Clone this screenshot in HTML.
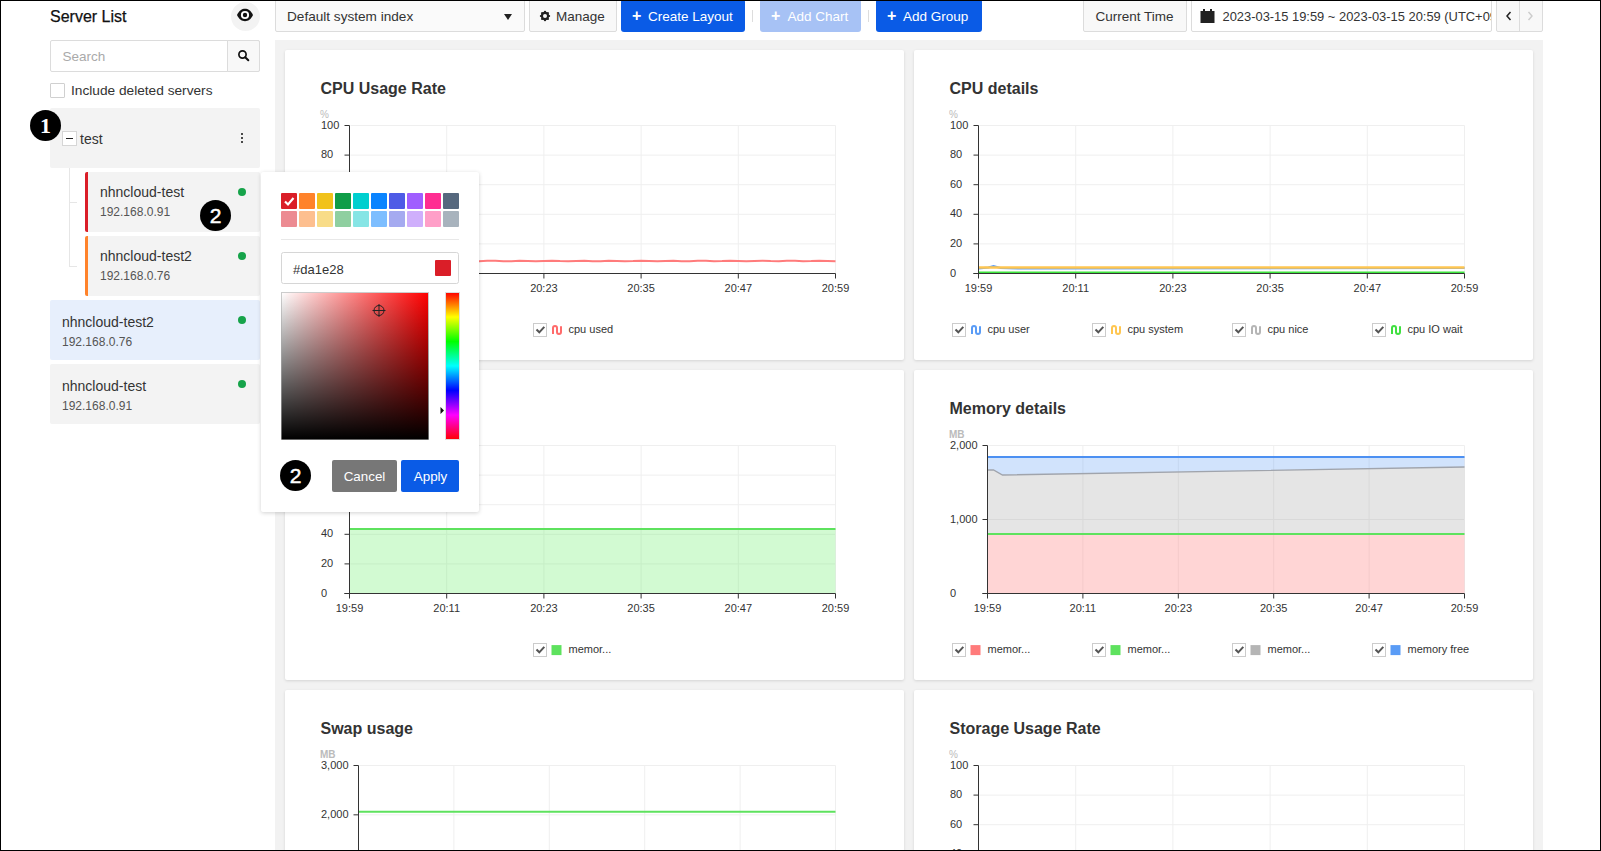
<!DOCTYPE html>
<html><head><meta charset="utf-8">
<style>
*{box-sizing:border-box;margin:0;padding:0}
html,body{width:1601px;height:851px;overflow:hidden;background:#fff;font-family:"Liberation Sans",sans-serif;color:#333}
.a{position:absolute}
.t{position:absolute;white-space:nowrap;line-height:1}
#frame{position:absolute;left:0;top:0;width:1601px;height:851px;border:1px solid #000;z-index:100;pointer-events:none}
.btn{position:absolute;top:-1px;height:33px;border:1px solid #dcdcdc;border-radius:2px;background:#f8f8f8}
.bbtn{position:absolute;top:-1px;height:33px;border-radius:3px;background:#0a5be6}
.sep{position:absolute;top:10px;width:1px;height:12px;background:#ddd}
.card{position:absolute;width:619px;height:310px;background:#fff;border-radius:2px;box-shadow:0 1px 3px rgba(0,0,0,.13)}
.srv{position:absolute;background:#f3f3f3;border-radius:2px}
.name{font-size:14px;color:#333}
.ip{font-size:12px;color:#555}
.dot{position:absolute;width:8px;height:8px;border-radius:50%;background:#16a34a}
.badge{position:absolute;width:31px;height:31px;border-radius:50%;background:#000;color:#fff;z-index:50}
svg text{font-family:"Liberation Sans",sans-serif}
.ttl{font-size:16px;font-weight:bold;fill:#333}
.unit{font-size:10px;fill:#bbb}
.unitb{font-size:10px;font-weight:bold;fill:#bbb}
.lab{font-size:11px;fill:#333}
.leg{font-size:11px;fill:#333}
.grid{stroke:#efefef;stroke-width:1}
.axis{stroke:#333;stroke-width:1}
</style></head><body>
<div id="frame"></div>

<!-- sidebar -->
<div class="t" style="left:50px;top:8.5px;font-size:16px;color:#111;-webkit-text-stroke:0.25px #111">Server List</div>
<div class="a" style="left:231px;top:2px;width:29px;height:29px;border-radius:50%;background:#f3f3f3"></div>
<svg class="a" style="left:236px;top:7px" width="18" height="16" viewBox="0 0 18 16">
 <path d="M1 8 C3 3.5 6 1.75 9 1.75 C12 1.75 15 3.5 17 8 C15 12.5 12 14.2 9 14.2 C6 14.2 3 12.5 1 8Z" fill="#111"/>
 <circle cx="9" cy="8" r="4.1" fill="#fff"/>
 <circle cx="9" cy="8" r="2.2" fill="#111"/>
</svg>

<div class="a" style="left:50px;top:40px;width:210px;height:32px;border:1px solid #dcdcdc;border-radius:2px;background:#fff"></div>
<div class="a" style="left:227px;top:40px;width:33px;height:32px;border:1px solid #dcdcdc;border-radius:0 2px 2px 0;background:#f8f8f8"></div>
<svg class="a" style="left:236px;top:48px" width="16" height="16" viewBox="0 0 16 16">
 <circle cx="6.5" cy="6.5" r="3.6" fill="none" stroke="#111" stroke-width="1.7"/>
 <path d="M9.2 9.2 L12.3 12.3" stroke="#111" stroke-width="2" stroke-linecap="round"/>
</svg>
<div class="t" style="left:62.5px;top:50px;font-size:13.5px;color:#aaa">Search</div>

<div class="a" style="left:50px;top:83px;width:15px;height:15px;border:1px solid #d0d0d0;border-radius:1px;background:#fff"></div>
<div class="t" style="left:71px;top:83.5px;font-size:13.7px;color:#333">Include deleted servers</div>

<div class="srv" style="left:50px;top:108px;width:210px;height:60px"></div>
<div class="a" style="left:62px;top:131px;width:15px;height:15px;border:1px solid #d6d6d6;background:#fff"></div>
<div class="a" style="left:66px;top:138px;width:7px;height:1px;background:#222"></div>
<div class="t" style="left:80px;top:132px;font-size:14px;color:#333">test</div>
<div class="a" style="left:241px;top:133px;width:2px;height:2px;background:#111;border-radius:1px"></div>
<div class="a" style="left:241px;top:137px;width:2px;height:2px;background:#111;border-radius:1px"></div>
<div class="a" style="left:241px;top:141px;width:2px;height:2px;background:#111;border-radius:1px"></div>

<div class="a" style="left:69px;top:168px;width:1px;height:99px;background:#e6e6e6"></div>
<div class="a" style="left:69px;top:202px;width:8px;height:1px;background:#e6e6e6"></div>
<div class="a" style="left:69px;top:266px;width:8px;height:1px;background:#e6e6e6"></div>

<div class="srv" style="left:85px;top:172px;width:175px;height:60px;border-left:3px solid #da1e28"></div>
<div class="t name" style="left:100px;top:184.5px">nhncloud-test</div>
<div class="t ip" style="left:100px;top:205.5px">192.168.0.91</div>
<div class="dot" style="left:238px;top:188px"></div>

<div class="srv" style="left:85px;top:236px;width:175px;height:60px;border-left:3px solid #ff832b"></div>
<div class="t name" style="left:100px;top:248.5px">nhncloud-test2</div>
<div class="t ip" style="left:100px;top:269.5px">192.168.0.76</div>
<div class="dot" style="left:238px;top:252px"></div>

<div class="srv" style="left:50px;top:300px;width:210px;height:60px;background:#e7effc"></div>
<div class="t name" style="left:62px;top:314.5px">nhncloud-test2</div>
<div class="t ip" style="left:62px;top:335.5px">192.168.0.76</div>
<div class="dot" style="left:238px;top:316px"></div>

<div class="srv" style="left:50px;top:364px;width:210px;height:60px"></div>
<div class="t name" style="left:62px;top:378.5px">nhncloud-test</div>
<div class="t ip" style="left:62px;top:399.5px">192.168.0.91</div>
<div class="dot" style="left:238px;top:380px"></div>

<!-- top bar -->
<div class="btn" style="left:275px;width:250px;background:#fafafa"></div>
<div class="t" style="left:287px;top:9.5px;font-size:13.6px;color:#333">Default system index</div>
<div class="a" style="left:503.5px;top:13.5px;width:0;height:0;border-left:4.5px solid transparent;border-right:4.5px solid transparent;border-top:6px solid #222"></div>

<div class="btn" style="left:529px;width:88px"></div>
<svg class="a" style="left:539px;top:10px" width="12" height="12" viewBox="0 0 12 12">
 <g fill="#222"><circle cx="6" cy="6" r="4.2"/>
 <rect x="4.9" y="0.8" width="2.2" height="10.4" rx="1"/>
 <rect x="4.9" y="0.8" width="2.2" height="10.4" rx="1" transform="rotate(45 6 6)"/>
 <rect x="4.9" y="0.8" width="2.2" height="10.4" rx="1" transform="rotate(90 6 6)"/>
 <rect x="4.9" y="0.8" width="2.2" height="10.4" rx="1" transform="rotate(135 6 6)"/></g>
 <circle cx="6" cy="6" r="2" fill="#f8f8f8"/>
</svg>
<div class="t" style="left:556px;top:9.5px;font-size:13.5px;color:#333">Manage</div>

<div class="bbtn" style="left:621px;width:124px"></div>
<div class="t" style="left:632px;top:8px;font-size:16px;font-weight:bold;color:#fff">+</div>
<div class="t" style="left:648px;top:10px;font-size:13.5px;color:#fff">Create Layout</div>
<div class="sep" style="left:752px"></div>

<div class="bbtn" style="left:760px;width:101px;background:#a7c2f5"></div>
<div class="t" style="left:771px;top:8px;font-size:16px;font-weight:bold;color:#fff">+</div>
<div class="t" style="left:787.5px;top:10px;font-size:13.5px;color:#fff">Add Chart</div>
<div class="sep" style="left:868px"></div>

<div class="bbtn" style="left:876px;width:106px"></div>
<div class="t" style="left:887px;top:8px;font-size:16px;font-weight:bold;color:#fff">+</div>
<div class="t" style="left:903px;top:10px;font-size:13.5px;color:#fff">Add Group</div>

<div class="btn" style="left:1083px;width:104px"></div>
<div class="t" style="left:1095.5px;top:9.5px;font-size:13.5px;color:#333">Current Time</div>

<div class="btn" style="left:1191px;width:301px;background:#fff;overflow:hidden">
 <svg class="a" style="left:8px;top:9px" width="15" height="15" viewBox="0 0 15 15">
  <rect x="0.5" y="2" width="14" height="12" fill="#222"/>
  <rect x="3" y="0" width="2" height="3" fill="#222"/><rect x="10" y="0" width="2" height="3" fill="#222"/>
   </svg>
 <div class="t" style="left:30.5px;top:10.5px;font-size:12.9px;color:#333">2023-03-15 19:59 ~ 2023-03-15 20:59 (UTC+09:00)</div>
</div>
<div class="btn" style="left:1496px;width:47px"></div>
<div class="a" style="left:1519px;top:0;width:1px;height:31px;background:#dcdcdc"></div>
<svg class="a" style="left:1503px;top:10px" width="12" height="12" viewBox="0 0 12 12"><path d="M7.5 2 L4 6 L7.5 10" fill="none" stroke="#222" stroke-width="1.5"/></svg>
<svg class="a" style="left:1524px;top:10px" width="12" height="12" viewBox="0 0 12 12"><path d="M4.5 2 L8 6 L4.5 10" fill="none" stroke="#ccc" stroke-width="1.4"/></svg>

<!-- dashboard -->
<div class="a" style="left:275px;top:40px;width:1268px;height:811px;background:#f2f2f2"></div>
<div class="card" style="left:285px;top:50px"></div>
<div class="card" style="left:914px;top:50px"></div>
<div class="card" style="left:285px;top:370px"></div>
<div class="card" style="left:914px;top:370px"></div>
<div class="card" style="left:285px;top:690px"></div>
<div class="card" style="left:914px;top:690px"></div>

<svg class="a" style="left:0;top:0" width="1601" height="851">
<text x="320.5" y="93.5" class="ttl">CPU Usage Rate</text>
<text x="320" y="117.5" class="unit">%</text>
<line x1="350.5" y1="125.5" x2="835.5" y2="125.5" class="grid"/>
<line x1="344.5" y1="125.5" x2="349.5" y2="125.5" class="axis"/>
<text x="321" y="128.5" class="lab">100</text>
<line x1="350.5" y1="155.1" x2="835.5" y2="155.1" class="grid"/>
<line x1="344.5" y1="155.1" x2="349.5" y2="155.1" class="axis"/>
<text x="321" y="158.1" class="lab">80</text>
<line x1="350.5" y1="184.7" x2="835.5" y2="184.7" class="grid"/>
<line x1="344.5" y1="184.7" x2="349.5" y2="184.7" class="axis"/>
<text x="321" y="187.7" class="lab">60</text>
<line x1="350.5" y1="214.3" x2="835.5" y2="214.3" class="grid"/>
<line x1="344.5" y1="214.3" x2="349.5" y2="214.3" class="axis"/>
<text x="321" y="217.3" class="lab">40</text>
<line x1="350.5" y1="243.9" x2="835.5" y2="243.9" class="grid"/>
<line x1="344.5" y1="243.9" x2="349.5" y2="243.9" class="axis"/>
<text x="321" y="246.9" class="lab">20</text>
<line x1="344.5" y1="273.5" x2="349.5" y2="273.5" class="axis"/>
<text x="321" y="276.5" class="lab">0</text>
<line x1="349.5" y1="273.5" x2="349.5" y2="278.5" class="axis"/>
<text x="349.5" y="292" class="lab" text-anchor="middle">19:59</text>
<line x1="446.7" y1="125.5" x2="446.7" y2="273.5" class="grid"/>
<line x1="446.7" y1="273.5" x2="446.7" y2="278.5" class="axis"/>
<text x="446.7" y="292" class="lab" text-anchor="middle">20:11</text>
<line x1="543.9" y1="125.5" x2="543.9" y2="273.5" class="grid"/>
<line x1="543.9" y1="273.5" x2="543.9" y2="278.5" class="axis"/>
<text x="543.9" y="292" class="lab" text-anchor="middle">20:23</text>
<line x1="641.1" y1="125.5" x2="641.1" y2="273.5" class="grid"/>
<line x1="641.1" y1="273.5" x2="641.1" y2="278.5" class="axis"/>
<text x="641.1" y="292" class="lab" text-anchor="middle">20:35</text>
<line x1="738.3" y1="125.5" x2="738.3" y2="273.5" class="grid"/>
<line x1="738.3" y1="273.5" x2="738.3" y2="278.5" class="axis"/>
<text x="738.3" y="292" class="lab" text-anchor="middle">20:47</text>
<line x1="835.5" y1="125.5" x2="835.5" y2="273.5" class="grid"/>
<line x1="835.5" y1="273.5" x2="835.5" y2="278.5" class="axis"/>
<text x="835.5" y="292" class="lab" text-anchor="middle">20:59</text>
<polyline points="349.5,261.0 357.6,261.3 365.7,260.9 373.8,260.7 381.9,261.1 390.0,261.2 398.1,260.8 406.2,260.8 414.3,261.3 422.4,261.1 430.5,260.7 438.6,261.0 446.7,261.3 454.8,261.0 462.9,260.7 471.0,261.1 479.1,261.3 487.2,260.8 495.3,260.8 503.4,261.2 511.5,261.2 519.6,260.7 527.7,260.9 535.8,261.3 543.9,261.0 552.0,260.7 560.1,261.1 568.2,261.3 576.3,260.9 584.4,260.8 592.5,261.2 600.6,261.2 608.7,260.7 616.8,260.9 624.9,261.3 633.0,261.1 641.1,260.7 649.2,261.0 657.3,261.3 665.4,260.9 673.5,260.7 681.6,261.2 689.7,261.2 697.8,260.8 705.9,260.8 714.0,261.3 722.1,261.1 730.2,260.7 738.3,261.0 746.4,261.3 754.5,260.9 762.6,260.7 770.7,261.1 778.8,261.3 786.9,260.8 795.0,260.8 803.1,261.2 811.2,261.1 819.3,260.7 827.4,260.9 835.5,261.3" fill="none" stroke="#ff7b7b" stroke-width="2"/>
<line x1="349.5" y1="125.5" x2="349.5" y2="273.5" class="axis"/>
<line x1="344.5" y1="273.5" x2="835.5" y2="273.5" class="axis"/>
<rect x="533.5" y="323.5" width="13" height="13" fill="#fff" stroke="#ccc"/>
<path d="M536.5 329.5 L539.3 332.3 L544.3 326.8" fill="none" stroke="#555" stroke-width="2"/>
<path d="M553.0 334.0 V328.0 a2 2 0 0 1 4 0 V332.0 a2 2 0 0 0 4 0 V326.3" fill="none" stroke="#ff6b6b" stroke-width="2"/>
<text x="568.5" y="333.2" class="leg">cpu used</text>
<text x="949.5" y="93.5" class="ttl">CPU details</text>
<text x="949" y="117.5" class="unit">%</text>
<line x1="979.5" y1="125.5" x2="1464.5" y2="125.5" class="grid"/>
<line x1="973.5" y1="125.5" x2="978.5" y2="125.5" class="axis"/>
<text x="950" y="128.5" class="lab">100</text>
<line x1="979.5" y1="155.1" x2="1464.5" y2="155.1" class="grid"/>
<line x1="973.5" y1="155.1" x2="978.5" y2="155.1" class="axis"/>
<text x="950" y="158.1" class="lab">80</text>
<line x1="979.5" y1="184.7" x2="1464.5" y2="184.7" class="grid"/>
<line x1="973.5" y1="184.7" x2="978.5" y2="184.7" class="axis"/>
<text x="950" y="187.7" class="lab">60</text>
<line x1="979.5" y1="214.3" x2="1464.5" y2="214.3" class="grid"/>
<line x1="973.5" y1="214.3" x2="978.5" y2="214.3" class="axis"/>
<text x="950" y="217.3" class="lab">40</text>
<line x1="979.5" y1="243.9" x2="1464.5" y2="243.9" class="grid"/>
<line x1="973.5" y1="243.9" x2="978.5" y2="243.9" class="axis"/>
<text x="950" y="246.9" class="lab">20</text>
<line x1="973.5" y1="273.5" x2="978.5" y2="273.5" class="axis"/>
<text x="950" y="276.5" class="lab">0</text>
<line x1="978.5" y1="273.5" x2="978.5" y2="278.5" class="axis"/>
<text x="978.5" y="292" class="lab" text-anchor="middle">19:59</text>
<line x1="1075.7" y1="125.5" x2="1075.7" y2="273.5" class="grid"/>
<line x1="1075.7" y1="273.5" x2="1075.7" y2="278.5" class="axis"/>
<text x="1075.7" y="292" class="lab" text-anchor="middle">20:11</text>
<line x1="1172.9" y1="125.5" x2="1172.9" y2="273.5" class="grid"/>
<line x1="1172.9" y1="273.5" x2="1172.9" y2="278.5" class="axis"/>
<text x="1172.9" y="292" class="lab" text-anchor="middle">20:23</text>
<line x1="1270.1" y1="125.5" x2="1270.1" y2="273.5" class="grid"/>
<line x1="1270.1" y1="273.5" x2="1270.1" y2="278.5" class="axis"/>
<text x="1270.1" y="292" class="lab" text-anchor="middle">20:35</text>
<line x1="1367.3" y1="125.5" x2="1367.3" y2="273.5" class="grid"/>
<line x1="1367.3" y1="273.5" x2="1367.3" y2="278.5" class="axis"/>
<text x="1367.3" y="292" class="lab" text-anchor="middle">20:47</text>
<line x1="1464.5" y1="125.5" x2="1464.5" y2="273.5" class="grid"/>
<line x1="1464.5" y1="273.5" x2="1464.5" y2="278.5" class="axis"/>
<text x="1464.5" y="292" class="lab" text-anchor="middle">20:59</text>
<line x1="978.5" y1="272.5" x2="1464.5" y2="272.5" stroke="#3ee53e" stroke-width="2"/>
<polyline points="978.5,268.5 988.5,267.5 993.5,266.0 1000.5,268.0 1018.5,268.5 1464.5,268.0" fill="none" stroke="#5a9cf6" stroke-width="2"/>
<line x1="978.5" y1="267.5" x2="1464.5" y2="267.5" stroke="#ffc650" stroke-width="2.4"/>
<line x1="978.5" y1="125.5" x2="978.5" y2="273.5" class="axis"/>
<line x1="973.5" y1="273.5" x2="1464.5" y2="273.5" class="axis"/>
<rect x="952.5" y="323.5" width="13" height="13" fill="#fff" stroke="#ccc"/>
<path d="M955.5 329.5 L958.3 332.3 L963.3 326.8" fill="none" stroke="#555" stroke-width="2"/>
<path d="M972.0 334.0 V328.0 a2 2 0 0 1 4 0 V332.0 a2 2 0 0 0 4 0 V326.3" fill="none" stroke="#5a9cf6" stroke-width="2"/>
<text x="987.5" y="333.2" class="leg">cpu user</text>
<rect x="1092.5" y="323.5" width="13" height="13" fill="#fff" stroke="#ccc"/>
<path d="M1095.5 329.5 L1098.3 332.3 L1103.3 326.8" fill="none" stroke="#555" stroke-width="2"/>
<path d="M1112.0 334.0 V328.0 a2 2 0 0 1 4 0 V332.0 a2 2 0 0 0 4 0 V326.3" fill="none" stroke="#ffc650" stroke-width="2"/>
<text x="1127.5" y="333.2" class="leg">cpu system</text>
<rect x="1232.5" y="323.5" width="13" height="13" fill="#fff" stroke="#ccc"/>
<path d="M1235.5 329.5 L1238.3 332.3 L1243.3 326.8" fill="none" stroke="#555" stroke-width="2"/>
<path d="M1252.0 334.0 V328.0 a2 2 0 0 1 4 0 V332.0 a2 2 0 0 0 4 0 V326.3" fill="none" stroke="#b5b5b5" stroke-width="2"/>
<text x="1267.5" y="333.2" class="leg">cpu nice</text>
<rect x="1372.5" y="323.5" width="13" height="13" fill="#fff" stroke="#ccc"/>
<path d="M1375.5 329.5 L1378.3 332.3 L1383.3 326.8" fill="none" stroke="#555" stroke-width="2"/>
<path d="M1392.0 334.0 V328.0 a2 2 0 0 1 4 0 V332.0 a2 2 0 0 0 4 0 V326.3" fill="none" stroke="#40e040" stroke-width="2"/>
<text x="1407.5" y="333.2" class="leg">cpu IO wait</text>
<text x="320.5" y="413.5" class="ttl">Memory usage</text>
<text x="320" y="437.5" class="unit">%</text>
<line x1="350.5" y1="445.5" x2="835.5" y2="445.5" class="grid"/>
<line x1="344.5" y1="445.5" x2="349.5" y2="445.5" class="axis"/>
<text x="321" y="448.5" class="lab">100</text>
<line x1="350.5" y1="475.1" x2="835.5" y2="475.1" class="grid"/>
<line x1="344.5" y1="475.1" x2="349.5" y2="475.1" class="axis"/>
<text x="321" y="478.1" class="lab">80</text>
<line x1="350.5" y1="504.7" x2="835.5" y2="504.7" class="grid"/>
<line x1="344.5" y1="504.7" x2="349.5" y2="504.7" class="axis"/>
<text x="321" y="507.7" class="lab">60</text>
<line x1="350.5" y1="534.3" x2="835.5" y2="534.3" class="grid"/>
<line x1="344.5" y1="534.3" x2="349.5" y2="534.3" class="axis"/>
<text x="321" y="537.3" class="lab">40</text>
<line x1="350.5" y1="563.9" x2="835.5" y2="563.9" class="grid"/>
<line x1="344.5" y1="563.9" x2="349.5" y2="563.9" class="axis"/>
<text x="321" y="566.9" class="lab">20</text>
<line x1="344.5" y1="593.5" x2="349.5" y2="593.5" class="axis"/>
<text x="321" y="596.5" class="lab">0</text>
<line x1="349.5" y1="593.5" x2="349.5" y2="598.5" class="axis"/>
<text x="349.5" y="612" class="lab" text-anchor="middle">19:59</text>
<line x1="446.7" y1="445.5" x2="446.7" y2="593.5" class="grid"/>
<line x1="446.7" y1="593.5" x2="446.7" y2="598.5" class="axis"/>
<text x="446.7" y="612" class="lab" text-anchor="middle">20:11</text>
<line x1="543.9" y1="445.5" x2="543.9" y2="593.5" class="grid"/>
<line x1="543.9" y1="593.5" x2="543.9" y2="598.5" class="axis"/>
<text x="543.9" y="612" class="lab" text-anchor="middle">20:23</text>
<line x1="641.1" y1="445.5" x2="641.1" y2="593.5" class="grid"/>
<line x1="641.1" y1="593.5" x2="641.1" y2="598.5" class="axis"/>
<text x="641.1" y="612" class="lab" text-anchor="middle">20:35</text>
<line x1="738.3" y1="445.5" x2="738.3" y2="593.5" class="grid"/>
<line x1="738.3" y1="593.5" x2="738.3" y2="598.5" class="axis"/>
<text x="738.3" y="612" class="lab" text-anchor="middle">20:47</text>
<line x1="835.5" y1="445.5" x2="835.5" y2="593.5" class="grid"/>
<line x1="835.5" y1="593.5" x2="835.5" y2="598.5" class="axis"/>
<text x="835.5" y="612" class="lab" text-anchor="middle">20:59</text>
<rect x="349.5" y="529" width="486.0" height="64.5" fill="#5eed5e" fill-opacity="0.28"/><line x1="349.5" y1="529" x2="835.5" y2="529" stroke="#5ee25e" stroke-width="2"/>
<line x1="349.5" y1="445.5" x2="349.5" y2="593.5" class="axis"/>
<line x1="344.5" y1="593.5" x2="835.5" y2="593.5" class="axis"/>
<rect x="533.5" y="643.5" width="13" height="13" fill="#fff" stroke="#ccc"/>
<path d="M536.5 649.5 L539.3 652.3 L544.3 646.8" fill="none" stroke="#555" stroke-width="2"/>
<rect x="551.5" y="645.1" width="10" height="10" fill="#5ee25e"/>
<text x="568.5" y="653.2" class="leg">memor...</text>
<text x="949.5" y="413.5" class="ttl">Memory details</text>
<text x="949" y="437.5" class="unitb">MB</text>
<line x1="988.5" y1="445.5" x2="1464.5" y2="445.5" class="grid"/>
<line x1="982.5" y1="445.5" x2="987.5" y2="445.5" class="axis"/>
<text x="950" y="448.5" class="lab">2,000</text>
<line x1="988.5" y1="519.5" x2="1464.5" y2="519.5" class="grid"/>
<line x1="982.5" y1="519.5" x2="987.5" y2="519.5" class="axis"/>
<text x="950" y="522.5" class="lab">1,000</text>
<line x1="982.5" y1="593.5" x2="987.5" y2="593.5" class="axis"/>
<text x="950" y="596.5" class="lab">0</text>
<line x1="987.5" y1="593.5" x2="987.5" y2="598.5" class="axis"/>
<text x="987.5" y="612" class="lab" text-anchor="middle">19:59</text>
<line x1="1082.9" y1="445.5" x2="1082.9" y2="593.5" class="grid"/>
<line x1="1082.9" y1="593.5" x2="1082.9" y2="598.5" class="axis"/>
<text x="1082.9" y="612" class="lab" text-anchor="middle">20:11</text>
<line x1="1178.3" y1="445.5" x2="1178.3" y2="593.5" class="grid"/>
<line x1="1178.3" y1="593.5" x2="1178.3" y2="598.5" class="axis"/>
<text x="1178.3" y="612" class="lab" text-anchor="middle">20:23</text>
<line x1="1273.7" y1="445.5" x2="1273.7" y2="593.5" class="grid"/>
<line x1="1273.7" y1="593.5" x2="1273.7" y2="598.5" class="axis"/>
<text x="1273.7" y="612" class="lab" text-anchor="middle">20:35</text>
<line x1="1369.1" y1="445.5" x2="1369.1" y2="593.5" class="grid"/>
<line x1="1369.1" y1="593.5" x2="1369.1" y2="598.5" class="axis"/>
<text x="1369.1" y="612" class="lab" text-anchor="middle">20:47</text>
<line x1="1464.5" y1="445.5" x2="1464.5" y2="593.5" class="grid"/>
<line x1="1464.5" y1="593.5" x2="1464.5" y2="598.5" class="axis"/>
<text x="1464.5" y="612" class="lab" text-anchor="middle">20:59</text>
<rect x="987.5" y="534" width="477.0" height="59.5" fill="#ff7b7b" fill-opacity="0.318"/>
<polygon points="987.5,534 987.5,470 993.5,470 1002.5,475 1464.5,467 1464.5,534" fill="#a0a0a0" fill-opacity="0.274"/>
<polygon points="987.5,457 1464.5,457 1464.5,467 1002.5,475 993.5,470 987.5,470" fill="#5a9cf6" fill-opacity="0.279"/>
<polyline points="987.5,470 993.5,470 1002.5,475 1464.5,467" fill="none" stroke="#a0a4ac" stroke-width="1.3"/>
<line x1="987.5" y1="534" x2="1464.5" y2="534" stroke="#5ee25e" stroke-width="2"/>
<line x1="987.5" y1="457" x2="1464.5" y2="457" stroke="#4c90f2" stroke-width="2"/>
<line x1="987.5" y1="445.5" x2="987.5" y2="593.5" class="axis"/>
<line x1="982.5" y1="593.5" x2="1464.5" y2="593.5" class="axis"/>
<rect x="952.5" y="643.5" width="13" height="13" fill="#fff" stroke="#ccc"/>
<path d="M955.5 649.5 L958.3 652.3 L963.3 646.8" fill="none" stroke="#555" stroke-width="2"/>
<rect x="970.5" y="645.1" width="10" height="10" fill="#ff7b7b"/>
<text x="987.5" y="653.2" class="leg">memor...</text>
<rect x="1092.5" y="643.5" width="13" height="13" fill="#fff" stroke="#ccc"/>
<path d="M1095.5 649.5 L1098.3 652.3 L1103.3 646.8" fill="none" stroke="#555" stroke-width="2"/>
<rect x="1110.5" y="645.1" width="10" height="10" fill="#5ee25e"/>
<text x="1127.5" y="653.2" class="leg">memor...</text>
<rect x="1232.5" y="643.5" width="13" height="13" fill="#fff" stroke="#ccc"/>
<path d="M1235.5 649.5 L1238.3 652.3 L1243.3 646.8" fill="none" stroke="#555" stroke-width="2"/>
<rect x="1250.5" y="645.1" width="10" height="10" fill="#b5b5b5"/>
<text x="1267.5" y="653.2" class="leg">memor...</text>
<rect x="1372.5" y="643.5" width="13" height="13" fill="#fff" stroke="#ccc"/>
<path d="M1375.5 649.5 L1378.3 652.3 L1383.3 646.8" fill="none" stroke="#555" stroke-width="2"/>
<rect x="1390.5" y="645.1" width="10" height="10" fill="#5a9cf6"/>
<text x="1407.5" y="653.2" class="leg">memory free</text>
<text x="320.5" y="733.5" class="ttl">Swap usage</text>
<text x="320" y="757.5" class="unitb">MB</text>
<line x1="359.5" y1="765.5" x2="835.5" y2="765.5" class="grid"/>
<line x1="353.5" y1="765.5" x2="358.5" y2="765.5" class="axis"/>
<text x="321" y="768.5" class="lab">3,000</text>
<line x1="359.5" y1="814.8333333333334" x2="835.5" y2="814.8333333333334" class="grid"/>
<line x1="353.5" y1="814.8333333333334" x2="358.5" y2="814.8333333333334" class="axis"/>
<text x="321" y="817.8333333333334" class="lab">2,000</text>
<line x1="359.5" y1="864.1666666666666" x2="835.5" y2="864.1666666666666" class="grid"/>
<line x1="353.5" y1="864.1666666666666" x2="358.5" y2="864.1666666666666" class="axis"/>
<text x="321" y="867.1666666666666" class="lab">1,000</text>
<line x1="353.5" y1="913.5" x2="358.5" y2="913.5" class="axis"/>
<text x="321" y="916.5" class="lab">0</text>
<line x1="358.5" y1="913.5" x2="358.5" y2="918.5" class="axis"/>
<text x="358.5" y="932" class="lab" text-anchor="middle">19:59</text>
<line x1="453.9" y1="765.5" x2="453.9" y2="913.5" class="grid"/>
<line x1="453.9" y1="913.5" x2="453.9" y2="918.5" class="axis"/>
<text x="453.9" y="932" class="lab" text-anchor="middle">20:11</text>
<line x1="549.3" y1="765.5" x2="549.3" y2="913.5" class="grid"/>
<line x1="549.3" y1="913.5" x2="549.3" y2="918.5" class="axis"/>
<text x="549.3" y="932" class="lab" text-anchor="middle">20:23</text>
<line x1="644.7" y1="765.5" x2="644.7" y2="913.5" class="grid"/>
<line x1="644.7" y1="913.5" x2="644.7" y2="918.5" class="axis"/>
<text x="644.7" y="932" class="lab" text-anchor="middle">20:35</text>
<line x1="740.1" y1="765.5" x2="740.1" y2="913.5" class="grid"/>
<line x1="740.1" y1="913.5" x2="740.1" y2="918.5" class="axis"/>
<text x="740.1" y="932" class="lab" text-anchor="middle">20:47</text>
<line x1="835.5" y1="765.5" x2="835.5" y2="913.5" class="grid"/>
<line x1="835.5" y1="913.5" x2="835.5" y2="918.5" class="axis"/>
<text x="835.5" y="932" class="lab" text-anchor="middle">20:59</text>
<line x1="358.5" y1="811.7" x2="835.5" y2="811.7" stroke="#5ee25e" stroke-width="2"/>
<line x1="358.5" y1="765.5" x2="358.5" y2="913.5" class="axis"/>
<line x1="353.5" y1="913.5" x2="835.5" y2="913.5" class="axis"/>
<rect x="533.5" y="963.5" width="13" height="13" fill="#fff" stroke="#ccc"/>
<path d="M536.5 969.5 L539.3 972.3 L544.3 966.8" fill="none" stroke="#555" stroke-width="2"/>
<rect x="551.5" y="965.1" width="10" height="10" fill="#5ee25e"/>
<text x="568.5" y="973.2" class="leg">swap</text>
<text x="949.5" y="733.5" class="ttl">Storage Usage Rate</text>
<text x="949" y="757.5" class="unit">%</text>
<line x1="979.5" y1="765.5" x2="1464.5" y2="765.5" class="grid"/>
<line x1="973.5" y1="765.5" x2="978.5" y2="765.5" class="axis"/>
<text x="950" y="768.5" class="lab">100</text>
<line x1="979.5" y1="795.1" x2="1464.5" y2="795.1" class="grid"/>
<line x1="973.5" y1="795.1" x2="978.5" y2="795.1" class="axis"/>
<text x="950" y="798.1" class="lab">80</text>
<line x1="979.5" y1="824.7" x2="1464.5" y2="824.7" class="grid"/>
<line x1="973.5" y1="824.7" x2="978.5" y2="824.7" class="axis"/>
<text x="950" y="827.7" class="lab">60</text>
<line x1="979.5" y1="854.3" x2="1464.5" y2="854.3" class="grid"/>
<line x1="973.5" y1="854.3" x2="978.5" y2="854.3" class="axis"/>
<text x="950" y="857.3" class="lab">40</text>
<line x1="979.5" y1="883.9" x2="1464.5" y2="883.9" class="grid"/>
<line x1="973.5" y1="883.9" x2="978.5" y2="883.9" class="axis"/>
<text x="950" y="886.9" class="lab">20</text>
<line x1="973.5" y1="913.5" x2="978.5" y2="913.5" class="axis"/>
<text x="950" y="916.5" class="lab">0</text>
<line x1="978.5" y1="913.5" x2="978.5" y2="918.5" class="axis"/>
<text x="978.5" y="932" class="lab" text-anchor="middle">19:59</text>
<line x1="1075.7" y1="765.5" x2="1075.7" y2="913.5" class="grid"/>
<line x1="1075.7" y1="913.5" x2="1075.7" y2="918.5" class="axis"/>
<text x="1075.7" y="932" class="lab" text-anchor="middle">20:11</text>
<line x1="1172.9" y1="765.5" x2="1172.9" y2="913.5" class="grid"/>
<line x1="1172.9" y1="913.5" x2="1172.9" y2="918.5" class="axis"/>
<text x="1172.9" y="932" class="lab" text-anchor="middle">20:23</text>
<line x1="1270.1" y1="765.5" x2="1270.1" y2="913.5" class="grid"/>
<line x1="1270.1" y1="913.5" x2="1270.1" y2="918.5" class="axis"/>
<text x="1270.1" y="932" class="lab" text-anchor="middle">20:35</text>
<line x1="1367.3" y1="765.5" x2="1367.3" y2="913.5" class="grid"/>
<line x1="1367.3" y1="913.5" x2="1367.3" y2="918.5" class="axis"/>
<text x="1367.3" y="932" class="lab" text-anchor="middle">20:47</text>
<line x1="1464.5" y1="765.5" x2="1464.5" y2="913.5" class="grid"/>
<line x1="1464.5" y1="913.5" x2="1464.5" y2="918.5" class="axis"/>
<text x="1464.5" y="932" class="lab" text-anchor="middle">20:59</text>

<line x1="978.5" y1="765.5" x2="978.5" y2="913.5" class="axis"/>
<line x1="973.5" y1="913.5" x2="1464.5" y2="913.5" class="axis"/>
<rect x="1162.5" y="963.5" width="13" height="13" fill="#fff" stroke="#ccc"/>
<path d="M1165.5 969.5 L1168.3 972.3 L1173.3 966.8" fill="none" stroke="#555" stroke-width="2"/>
<rect x="1180.5" y="965.1" width="10" height="10" fill="#5ee25e"/>
<text x="1197.5" y="973.2" class="leg">storage</text>
</svg>

<!-- popup -->
<div class="a" style="left:261px;top:172px;width:218px;height:340px;background:#fff;border-radius:2px;box-shadow:0 1px 4px rgba(0,0,0,.18)"></div>
<svg class="a" style="left:261px;top:172px" width="218" height="340" viewBox="0 0 218 340">
 <defs>
  <linearGradient id="sw" x1="0" y1="0" x2="1" y2="0"><stop offset="0" stop-color="#fff"/><stop offset="1" stop-color="#ff0000"/></linearGradient>
  <linearGradient id="sb" x1="0" y1="0" x2="0" y2="1"><stop offset="0" stop-color="#000" stop-opacity="0"/><stop offset="1" stop-color="#000"/></linearGradient>
  <linearGradient id="hue" x1="0" y1="0" x2="0" y2="1">
   <stop offset="0" stop-color="#f00"/><stop offset="0.1667" stop-color="#ff0"/><stop offset="0.3333" stop-color="#0f0"/>
   <stop offset="0.5" stop-color="#0ff"/><stop offset="0.6667" stop-color="#00f"/><stop offset="0.8333" stop-color="#f0f"/><stop offset="1" stop-color="#f00"/>
  </linearGradient>
 </defs>
 <rect x="20" y="21" width="16" height="16" rx="1" fill="#da1e28"/>
<rect x="38" y="21" width="16" height="16" rx="1" fill="#ff832b"/>
<rect x="56" y="21" width="16" height="16" rx="1" fill="#f1c21b"/>
<rect x="74" y="21" width="16" height="16" rx="1" fill="#0f9d48"/>
<rect x="92" y="21" width="16" height="16" rx="1" fill="#00cfcf"/>
<rect x="110" y="21" width="16" height="16" rx="1" fill="#0a84ff"/>
<rect x="128" y="21" width="16" height="16" rx="1" fill="#4e5be6"/>
<rect x="146" y="21" width="16" height="16" rx="1" fill="#a05eff"/>
<rect x="164" y="21" width="16" height="16" rx="1" fill="#ff2d92"/>
<rect x="182" y="21" width="16" height="16" rx="1" fill="#56687e"/>
<rect x="20" y="39" width="16" height="16" rx="1" fill="#ec8b92"/>
<rect x="38" y="39" width="16" height="16" rx="1" fill="#fdbf8f"/>
<rect x="56" y="39" width="16" height="16" rx="1" fill="#f8dc88"/>
<rect x="74" y="39" width="16" height="16" rx="1" fill="#8fcfa0"/>
<rect x="92" y="39" width="16" height="16" rx="1" fill="#86e5e5"/>
<rect x="110" y="39" width="16" height="16" rx="1" fill="#7dbeff"/>
<rect x="128" y="39" width="16" height="16" rx="1" fill="#a5aaf0"/>
<rect x="146" y="39" width="16" height="16" rx="1" fill="#cfaffc"/>
<rect x="164" y="39" width="16" height="16" rx="1" fill="#ff9fc8"/>
<rect x="182" y="39" width="16" height="16" rx="1" fill="#a8b3bd"/>
<path d="M24 29.5 L27 32.5 L32.5 26" fill="none" stroke="#fff" stroke-width="2.2"/>
 <line x1="20" y1="67.5" x2="198" y2="67.5" stroke="#e8e8e8"/>
 <rect x="20.5" y="80.5" width="177" height="31" rx="2" fill="#fff" stroke="#d6d6d6"/>
 <text x="32" y="101.5" font-size="13" fill="#333" style="font-family:'Liberation Sans',sans-serif">#da1e28</text>
 <rect x="174" y="88" width="16" height="16" rx="1" fill="#da1e28"/>
 <rect x="20.5" y="120.5" width="147" height="147" fill="url(#sw)" stroke="#ccc"/>
 <rect x="20.5" y="120.5" width="147" height="147" fill="url(#sb)"/>
 <g fill="none" stroke="#222" stroke-width="1"><circle cx="118" cy="138.5" r="5"/><line x1="118" y1="132" x2="118" y2="145"/><line x1="111.5" y1="138.5" x2="124.5" y2="138.5"/></g>
 <rect x="184.5" y="120.5" width="14" height="147" fill="url(#hue)" stroke="#ddd"/>
 <path d="M179.5 235 L183 238.5 L179.5 242Z" fill="#111"/>
 <rect x="71" y="288" width="65" height="32" rx="2" fill="#777"/>
 <text x="103.5" y="309" font-size="13.4" fill="#fff" text-anchor="middle" style="font-family:'Liberation Sans',sans-serif">Cancel</text>
 <rect x="140" y="288" width="58" height="32" rx="2" fill="#0a5be6"/>
 <text x="169.5" y="309" font-size="13.4" fill="#fff" text-anchor="middle" style="font-family:'Liberation Sans',sans-serif">Apply</text>
</svg>

<!-- badges -->
<div class="badge" style="left:30px;top:110px"><div class="t" style="left:0;width:31px;text-align:center;top:5px;font-family:'Liberation Serif',serif;font-size:22px;font-weight:bold">1</div></div>
<div class="badge" style="left:200px;top:200px"><div class="t" style="left:0;width:31px;text-align:center;top:5px;font-size:21px;-webkit-text-stroke:0.5px #fff">2</div></div>
<div class="badge" style="left:280px;top:460px"><div class="t" style="left:0;width:31px;text-align:center;top:5px;font-size:21px;-webkit-text-stroke:0.5px #fff">2</div></div>

</body></html>
